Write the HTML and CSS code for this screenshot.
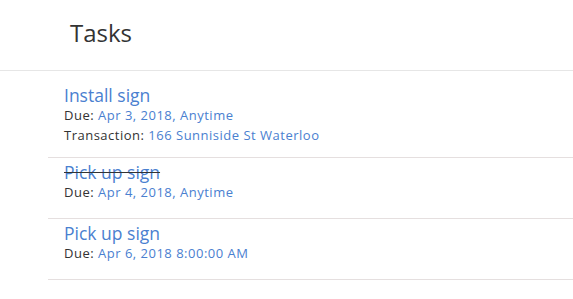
FILE: index.html
```html
<!DOCTYPE html>
<html>
<head>
<meta charset="utf-8">
<link rel="stylesheet" href="styles.css">
</head>
<body>
<header class="page-header">
  <h1 class="page-title">Tasks</h1>
</header>
<ul class="task-list">
  <li class="task first">
    <a class="task-title" href="#">Install sign</a>
    <div class="task-meta"><span class="label">Due:</span> <span class="value">Apr 3, 2018, Anytime</span></div>
    <div class="task-meta"><span class="label">Transaction:</span> <a class="value" href="#">166 Sunniside St Waterloo</a></div>
  </li>
  <li class="task">
    <a class="task-title done" href="#">Pick up sign</a>
    <div class="task-meta"><span class="label">Due:</span> <span class="value">Apr 4, 2018, Anytime</span></div>
  </li>
  <li class="task">
    <a class="task-title" href="#">Pick up sign</a>
    <div class="task-meta"><span class="label">Due:</span> <span class="value">Apr 6, 2018 8:00:00 AM</span></div>
  </li>
</ul>
</body>
</html>
```
FILE: styles.css
```css
html, body {
  margin: 0;
  padding: 0;
  background: #ffffff;
  font-family: "Open Sans", "DejaVu Sans", sans-serif;
  color: #333333;
}
.page-header {
  height: 70px;
  border-bottom: 1px solid #e6e6e6;
  padding-left: 70px;
  display: flex;
  align-items: flex-start;
}
.page-title {
  margin: 0;
  padding-top: 16px;
  font-size: 24px;
  line-height: 34px;
  font-weight: 400;
  color: #333333;
}
.task-list {
  list-style: none;
  margin: 0 0 0 48px;
  padding: 10px 0 0 0;
}
.task {
  padding: 4px 0 16px 16px;
  border-bottom: 1px solid #e5dfdf;
}
.task.first {
  padding-top: 4px;
  padding-bottom: 12px;
}
.task-title {
  display: block;
  font-size: 17.5px;
  line-height: 20px;
  color: #4a80d0;
  text-decoration: none;
}
.task-title.done {
  text-decoration: line-through;
  text-decoration-color: #333333;
}
.task-meta {
  font-size: 13px;
  letter-spacing: 0.5px;
  line-height: 19px;
  margin-top: 1px;
}
.task-meta .label {
  color: #333333;
}
.task-meta .value {
  color: #4a80d0;
  text-decoration: none;
}
```
